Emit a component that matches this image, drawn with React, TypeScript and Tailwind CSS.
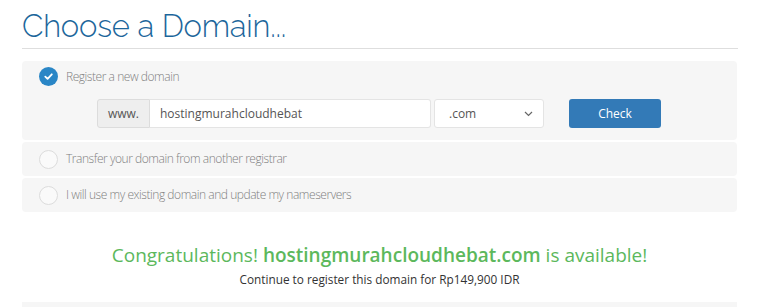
import React from 'react';

const Radio = ({ checked }: { checked?: boolean }) =>
  checked ? (
    <span className="flex h-[19px] w-[19px] shrink-0 items-center justify-center rounded-full bg-[#2a86c6]">
      <svg width="11" height="11" viewBox="0 0 12 12" fill="none">
        <path d="M2.5 6.2 L5 8.6 L9.6 3.6" stroke="white" strokeWidth="2" strokeLinecap="round" strokeLinejoin="round" />
      </svg>
    </span>
  ) : (
    <span className="h-[19px] w-[19px] shrink-0 rounded-full border border-[#dcdcdc] bg-[#fafafa]" />
  );

export default function App() {
  return (
    <div className="min-h-[307px] w-[768px] overflow-hidden bg-white px-[22px] font-['Open_Sans',sans-serif]">
      {/* Heading */}
      <h1 className="pt-[6px] text-[31px] font-light leading-[40px] tracking-[-0.2px] text-[#1c669b] font-['Raleway','Open_Sans',sans-serif]">
        Choose a Domain...
      </h1>
      <div className="mt-[2px] h-px w-[716px] bg-[#dedede]" />

      {/* Options */}
      <div className="mt-[12px] w-[715px] space-y-[2px]">
        <div className="rounded-[4px] bg-[#f6f6f6] pl-[17px] pr-4 pt-[6px] pb-[12px]">
          <div className="flex items-center gap-[8px] text-[12px] font-light tracking-[-0.45px] text-[#808080]">
            <Radio checked />
            <span>Register a new domain</span>
          </div>
          <div className="mt-[13px] flex items-center pl-[58px]">
            <div className="flex h-[29px] w-[53px] items-center justify-center rounded-l-[3px] border border-[#dcdcdc] bg-[#eeeeee] text-[12px] text-[#555]">
              www.
            </div>
            <div className="flex h-[29px] w-[281px] items-center rounded-r-[3px] border border-l-0 border-[#e4e4e4] bg-white px-[10px] text-[12px] text-[#555]">
              hostingmurahcloudhebat
            </div>
            <div className="ml-[3px] flex h-[29px] w-[110px] items-center justify-between rounded-[3px] border border-[#e4e4e4] bg-white pl-[14px] pr-[10px] text-[12px] text-[#555]">
              <span>.com</span>
              <svg width="9" height="6" viewBox="0 0 9 6" fill="none">
                <path d="M1 1 L4.5 4.5 L8 1" stroke="#666" strokeWidth="1.2" />
              </svg>
            </div>
            <button className="ml-[25px] flex h-[29px] w-[92px] items-center justify-center rounded-[3px] bg-[#337ab7] text-[12px] text-white">
              Check
            </button>
          </div>
        </div>
        <div className="flex h-[34px] items-center gap-[8px] rounded-[4px] bg-[#f6f6f6] pl-[17px] text-[12px] font-light tracking-[-0.45px] text-[#808080]">
          <Radio />
          <span>Transfer your domain from another registrar</span>
        </div>
        <div className="flex h-[34px] items-center gap-[8px] rounded-[4px] bg-[#f6f6f6] pl-[17px] text-[12px] font-light tracking-[-0.45px] text-[#808080]">
          <Radio />
          <span>I will use my existing domain and update my nameservers</span>
        </div>
      </div>

      {/* Result */}
      <div className="mt-[29px] w-[715px] text-center">
        <p className="text-[19px] leading-[28px] text-[#5cb85c]">
          Congratulations! <strong className="font-semibold">hostingmurahcloudhebat.com</strong> is available!
        </p>
        <p className="mt-[1px] text-[11.8px] leading-[18px] text-[#333]">
          Continue to register this domain for Rp149,900 IDR
        </p>
      </div>
      <div className="mt-[14px] h-[20px] w-[715px] bg-[#f6f6f6]" />
    </div>
  );
}
